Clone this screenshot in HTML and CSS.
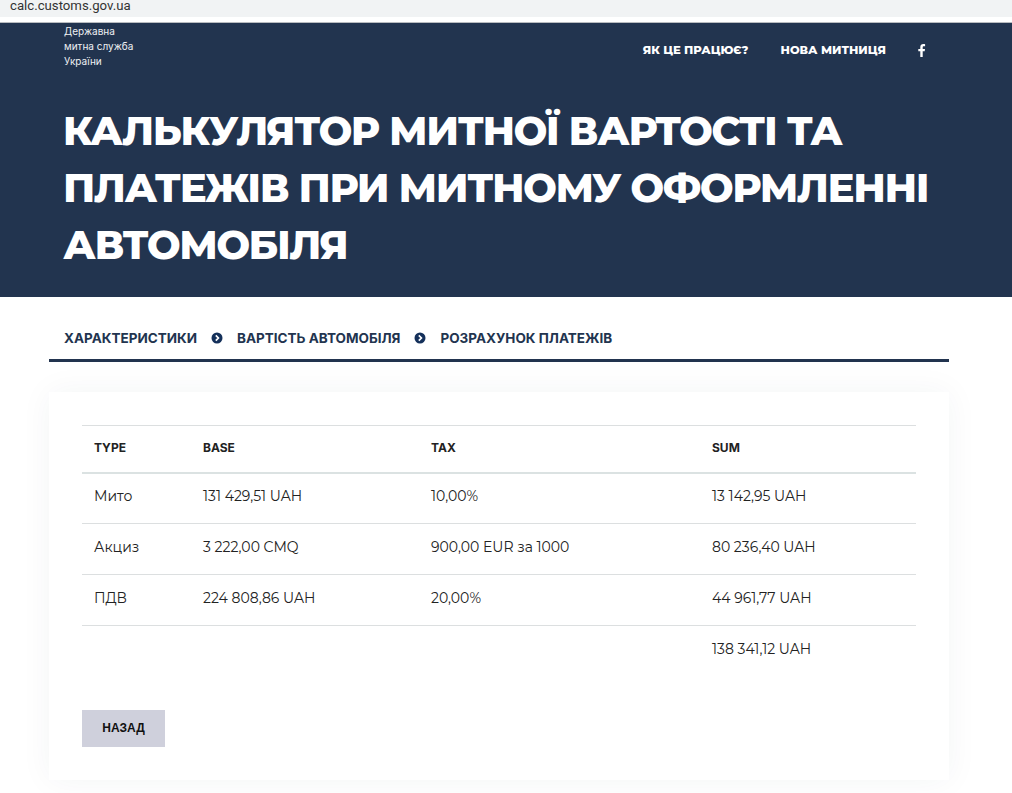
FILE: index.html
```html
<!DOCTYPE html>
<html lang="uk">
<head>
	<meta charset="utf-8" />
	<title>Калькулятор митної вартості</title>
	<link rel="stylesheet" href="styles.css">
</head>
<body>
	<div class="urlbar">calc.customs.gov.ua</div>
	<header class="hero">
		<div class="topline">
			<div class="logo">Державна<br>митна служба<br>України</div>
			<nav class="menu">
				<a href="#">ЯК ЦЕ ПРАЦЮЄ?</a>
				<a href="#">НОВА МИТНИЦЯ</a>
				<a href="#" class="fb">
					<svg width="8" height="13" viewBox="0 0 8 13"><path fill="#fff" d="M2.3 13V7.2H.3V4.9h2V3.2C2.3 1.2 3.5.1 5.300.1c.9 0 1.600.1 1.800.1v2.100H5.900c-1 0-1.200.5-1.200 1.200v1.400h2.300l-.3 2.300h-2V13z"/></svg>
				</a>
			</nav>
		</div>
		<h1>КАЛЬКУЛЯТОР МИТНОЇ ВАРТОСТІ ТА<br>ПЛАТЕЖІВ ПРИ МИТНОМУ ОФОРМЛЕННІ<br>АВТОМОБІЛЯ</h1>
	</header>

	<div class="wrap">
		<div class="steps">
			<span>ХАРАКТЕРИСТИКИ</span>
			<svg class="arrow" width="12" height="12" viewBox="0 0 12 12"><circle cx="6" cy="6" r="5.500" fill="#14305a"/><path d="M4.800 3.300 7.400 6 4.800 8.700" fill="none" stroke="#fff" stroke-width="1.700"/></svg>
			<span>ВАРТІСТЬ АВТОМОБІЛЯ</span>
			<svg class="arrow" width="12" height="12" viewBox="0 0 12 12"><circle cx="6" cy="6" r="5.500" fill="#14305a"/><path d="M4.800 3.300 7.400 6 4.800 8.700" fill="none" stroke="#fff" stroke-width="1.700"/></svg>
			<span>РОЗРАХУНОК ПЛАТЕЖІВ</span>
		</div>

		<div class="card">
			<table class="result">
				<thead>
					<tr><th>TYPE</th><th>BASE</th><th>TAX</th><th>SUM</th></tr>
				</thead>
				<tbody>
					<tr><td>Мито</td><td>131 429,51 UAH</td><td>10,00%</td><td>13 142,95 UAH</td></tr>
					<tr><td>Акциз</td><td>3 222,00 CMQ</td><td>900,00 EUR за 1000</td><td>80 236,40 UAH</td></tr>
					<tr><td>ПДВ</td><td>224 808,86 UAH</td><td>20,00%</td><td>44 961,77 UAH</td></tr>
					<tr><td></td><td></td><td></td><td>138 341,12 UAH</td></tr>
				</tbody>
			</table>
			<button class="back">НАЗАД</button>
		</div>
	</div>
</body>
</html>
```

FILE: styles.css
```css
html, body { margin: 0; padding: 0; background: #fff; overflow: hidden; }
body { height: 793px; font-family: "Inter", "Liberation Sans", sans-serif; color: #222; }

.urlbar { height: 17px; background: #f1f3f4; border-bottom: 5px solid #fff; box-shadow: 0 1px 0 #b9bcc0; margin-bottom: 1px; padding-left: 10px; font: 13.200px/12px "Roboto", Arial, sans-serif; color: #333; }

.hero { background: #22344f; height: 274px; padding: 0 64px 0 63px; box-sizing: border-box; color: #fff; }
.topline { display: flex; justify-content: space-between; height: 79px; }
.logo { font: 10px/15px "Inter", "Liberation Sans", sans-serif; padding: 1px 0 0 1px; color: #eef0f3; }
.menu { display: flex; align-items: center; gap: 32px; height: 54px; padding-right: 22px; }
.menu a { color: #fff; text-decoration: none; font: 800 11.500px "Montserrat", "Inter", "Liberation Sans", sans-serif; }
.menu .fb { display: flex; }

h1 { margin: 0; font: 800 40px/57px "Montserrat", "Inter", "Liberation Sans", sans-serif; letter-spacing: -1.350px; white-space: nowrap; }

.wrap { width: 900px; margin-left: 49px; }

.steps { display: flex; align-items: center; height: 65px; padding: 19px 0 0 15px; box-sizing: border-box; border-bottom: 3px solid #22344f; font: 700 13.500px "Inter", "Liberation Sans", sans-serif; color: #22344f; }
.arrow { margin: 0 14px; }

.card { margin-top: 30px; height: 388px; padding: 33px 33px 0; box-sizing: border-box; background: #fff; box-shadow: 0 0 30px rgba(40, 50, 70, .05); }

.result { width: 100%; border-collapse: collapse; table-layout: fixed; font: 14px "Montserrat", "Inter", "Liberation Sans", sans-serif; }
.result th { height: 47px; padding: 0 12px 3px; box-sizing: border-box; text-align: left; font: 700 12px "Inter", "Liberation Sans", sans-serif; color: #222; border-top: 1px solid #dcdfe0; border-bottom: 2px solid #dbe2e2; }
.result td { height: 51px; padding: 0 12px 5px; box-sizing: border-box; border-bottom: 1px solid #dcdfe0; }
.result tr:last-child td { border-bottom: none; }
.result th:nth-child(1) { width: 109px; }
.result th:nth-child(2) { width: 228px; }
.result th:nth-child(3) { width: 281px; }

.back { display: block; width: 83px; height: 37px; margin-top: 33px; border: none; background: #cfd0dc; font: 700 12px "Liberation Sans", Arial, sans-serif; color: #111; }
```
